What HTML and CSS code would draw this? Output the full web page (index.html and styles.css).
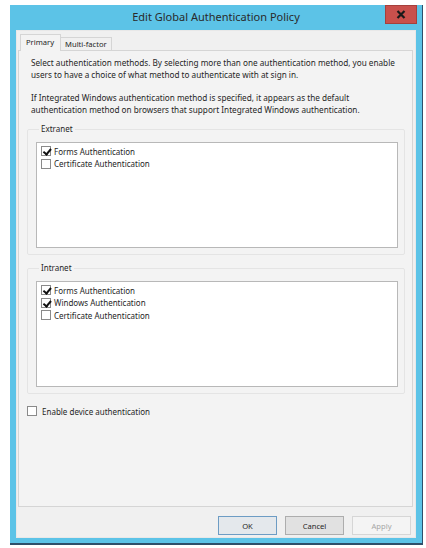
FILE: index.html
```html
<!DOCTYPE html>
<html lang="en">
<head>
  <meta charset="UTF-8" />
  <meta name="viewport" content="width=device-width, initial-scale=1.0"/>
  <title>Edit Global Authentication Policy</title>
<link rel="stylesheet" href="styles.css">
</head>
<body>
  <div class="window">
    <div class="titlebar">
      <span class="title">Edit Global Authentication Policy</span>
      <button class="close-button">
        <svg width="10" height="9" viewBox="0 0 10 9"><path d="M1.5 1 L8.5 8 M8.5 1 L1.5 8" stroke="#1a1a1a" stroke-width="2.2"/></svg>
      </button>
    </div>

    <div class="client">
      <div class="tabs">
        <div class="tab active">Primary</div>
        <div class="tab">Multi-factor</div>
      </div>

      <div class="tab-page">
        <p>Select authentication methods. By selecting more than one authentication method, you enable<br>users to have a choice of what method to authenticate with at sign in.</p>
        <p>If Integrated Windows authentication method is specified, it appears as the default<br>authentication method on browsers that support Integrated Windows authentication.</p>

        <fieldset class="group">
          <legend>Extranet</legend>
          <div class="listbox">
            <label class="check"><span class="box checked"></span>Forms Authentication</label>
            <label class="check"><span class="box"></span>Certificate Authentication</label>
          </div>
        </fieldset>

        <fieldset class="group">
          <legend>Intranet</legend>
          <div class="listbox">
            <label class="check"><span class="box checked"></span>Forms Authentication</label>
            <label class="check"><span class="box checked"></span>Windows Authentication</label>
            <label class="check"><span class="box"></span>Certificate Authentication</label>
          </div>
        </fieldset>

        <label class="check device"><span class="box"></span>Enable device authentication</label>
      </div>

      <div class="buttons">
        <button class="btn default">OK</button>
        <button class="btn">Cancel</button>
        <button class="btn disabled">Apply</button>
      </div>
    </div>
  </div>
</body>
</html>
```

FILE: styles.css
```css
:root {
  --frame: #5cc3e7;
  --client: #f0f0f0;
  --page: #f3f3f3;
  --line: #d5d5d5;
  --text: #262626;
}

body {
  margin: 0;
  background-color: #ffffff;
  font-family: 'Noto Sans', 'Open Sans', sans-serif;
  color: var(--text);
}

.window {
  margin: 5px 0 0 10px;
  width: 413px;
  height: 540px;
  background-color: var(--frame);
  box-sizing: border-box;
  border-right: 1px solid #2f4f6a;
  border-bottom: 2px solid #2f4f6a;
  display: flex;
  flex-direction: column;
}

.titlebar {
  height: 25px;
  display: flex;
  align-items: center;
  justify-content: center;
  position: relative;
}

.title {
  font-size: 11px;
  color: #2a2a2a;
  margin-top: -2px;
}

.close-button {
  position: absolute;
  top: 0;
  right: 5px;
  width: 32px;
  height: 19px;
  background-color: #c9504c;
  border: 1px solid #a5403c;
  padding: 0;
  display: flex;
  align-items: center;
  justify-content: center;
}

.client {
  flex: 1;
  margin: 0 6px 5px 6px;
  background-color: var(--client);
  border: 1px solid #e8e8e8;
  padding: 3px 2px 0 1px;
  display: flex;
  flex-direction: column;
}

.tabs {
  display: flex;
  align-items: flex-end;
  padding-left: 2px;
  height: 16px;
  position: relative;
  z-index: 1;
}

.tab {
  font-size: 7.6px;
  padding: 0 4px;
  height: 13px;
  line-height: 12px;
  border: 1px solid var(--line);
  border-bottom: none;
  background-color: #f0f0f0;
  box-sizing: border-box;
}

.tab.active {
  height: 17px;
  line-height: 14px;
  padding: 0 6px 0 5px;
  background-color: var(--page);
  margin-bottom: -1px;
}

.tab + .tab {
  border-left: none;
}

.tab-page {
  height: 457px;
  box-sizing: border-box;
  background-color: var(--page);
  border: 1px solid var(--line);
  padding: 6px 7px 0 8px;
  font-size: 8px;
}

.tab-page p {
  margin: 0 0 11px 4px;
  font-size: 8.2px;
  line-height: 12px;
  white-space: nowrap;
}

.tab-page p + p {
  margin-bottom: 7px;
}

.group {
  margin: 0;
  padding: 7px 6px 6px 8px;
  border: 1px solid #e4e4e4;
  border-radius: 2px;
}

.group + .group {
  margin-top: 7px;
}

.group legend {
  padding: 0 2px;
  margin-left: 3px;
  line-height: 12px;
}

.listbox {
  height: 106px;
  background-color: #ffffff;
  border: 1px solid #b8b8b8;
  padding: 2px 0 0 4px;
  box-sizing: border-box;
}

.check {
  display: flex;
  align-items: center;
  height: 12.5px;
}

.box {
  width: 10px;
  height: 10px;
  box-sizing: border-box;
  border: 1px solid #8a8a8a;
  background-color: #ffffff;
  margin-right: 3px;
  position: relative;
}

.box.checked::after {
  content: "";
  position: absolute;
  left: 2.5px;
  top: 0;
  width: 2.5px;
  height: 5.5px;
  border: solid #111;
  border-width: 0 2px 2px 0;
  transform: rotate(40deg);
}

.device {
  margin: 11px 0 0 0;
}

.device .box {
  margin-right: 5px;
}

.buttons {
  display: flex;
  justify-content: flex-end;
  gap: 8px;
  padding: 9px 2px 0 0;
}

.btn {
  width: 59px;
  height: 19px;
  font-family: inherit;
  font-size: 7.6px;
  color: var(--text);
  background-color: #e1e1e1;
  border: 1px solid #adadad;
  padding: 0;
}

.btn.default {
  border-color: #6d9cc4;
  background-color: #e4e8ec;
}

.btn.disabled {
  color: #a6a6a6;
  background-color: #f4f4f4;
  border-color: #d6d6d6;
}
```
